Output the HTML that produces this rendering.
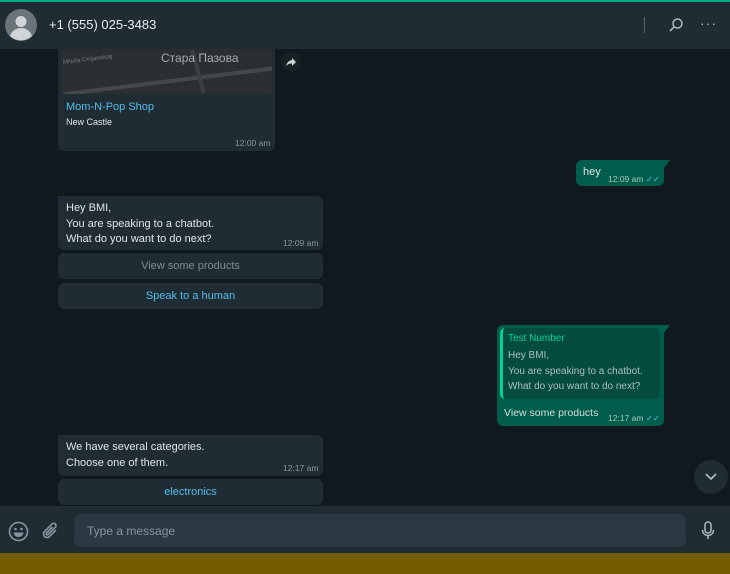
<!DOCTYPE html>
<html><head><meta charset="utf-8"><style>
*{margin:0;padding:0;box-sizing:border-box}
body{width:730px;height:574px;background:#0f191e;font-family:"Liberation Sans",sans-serif;position:relative;overflow:hidden;color:#e1e5e7}
.a{position:absolute}
.in{background:#1f2c33;border-radius:6px}
.btn{background:#1f2c33;border-radius:6px;text-align:center;font-size:11px;line-height:26px;color:#53bdeb}
.t{font-size:12px;line-height:16px}
.tm{font-size:8.5px;color:#8696a0}
</style></head><body>
<div class="a" style="left:0;top:0;width:730px;height:2px;background:#00a884"></div>
<div class="a" style="left:0;top:2px;width:730px;height:47px;background:#1f2c33"></div>
<svg class="a" style="left:5px;top:9px" width="32" height="32" viewBox="0 0 32 32"><circle cx="16" cy="16" r="16" fill="#6b7478"/><circle cx="16" cy="12.5" r="5.5" fill="#cfd4d6"/><path d="M5 27c2-6 7-8 11-8s9 2 11 8a16 16 0 0 1-22 0z" fill="#cfd4d6"/></svg>
<div class="a" style="left:49px;top:17px;font-size:13px;color:#e9edef">+1 (555) 025-3483</div>
<div class="a" style="left:644px;top:17px;width:1px;height:16px;background:#5a6469"></div>
<svg class="a" style="left:668px;top:17px" width="16" height="16" viewBox="0 0 16 16"><circle cx="9.5" cy="6.5" r="4.5" fill="none" stroke="#aebac1" stroke-width="1.5"/><path d="M6.3 9.7L2 14" stroke="#aebac1" stroke-width="1.6"/></svg>
<div class="a" style="left:700px;top:15px;font-size:14px;color:#aebac1;letter-spacing:1px">···</div>

<div class="a in" style="left:58px;top:44px;width:217px;height:107px;border-radius:0 0 6px 6px"></div>
<div class="a" style="left:61px;top:49px;width:211px;height:45px;background:#2c2f31;border-radius:0 0 5px 5px;overflow:hidden">
<div class="a" style="left:-10px;top:30px;width:240px;height:4px;background:#45484a;transform:rotate(-7deg)"></div>
<div class="a" style="left:135px;top:0;width:4px;height:45px;background:#3c3f41;transform:rotate(-15deg)"></div>
<div class="a" style="left:100px;top:2px;font-size:12px;color:#a8abad">Стара Пазова</div>
<div class="a" style="left:2px;top:8px;font-size:6px;color:#77797b;transform:rotate(-7deg)">Miloša Crnjanskog</div>
</div>
<div class="a" style="left:66px;top:101px;font-size:11px;color:#53bdeb">Mom-N-Pop Shop</div>
<div class="a" style="left:66px;top:117px;font-size:9px;color:#e1e5e7">New Castle</div>
<div class="a tm" style="left:235px;top:138px">12:00 am</div>
<svg class="a" style="left:281px;top:52px" width="20" height="20" viewBox="0 0 20 20"><circle cx="10" cy="10" r="10" fill="#182024"/><path d="M11 6l4 4-4 4v-2.5c-3 0-5 1-6 3 .5-3.5 2.5-6 6-6.5z" fill="#c9cfd2"/></svg>

<div class="a" style="left:576px;top:160px;width:88px;height:26px;background:#005c4b;border-radius:6px 0 6px 6px"></div>
<div class="a" style="left:664px;top:160px;width:0;height:0;border-top:8px solid #005c4b;border-right:6px solid transparent"></div>
<div class="a" style="left:583px;top:166px;font-size:11px">hey</div>
<div class="a tm" style="left:608px;top:174px;color:#a8c7c1">12:09 am <span style="color:#53bdeb">✓✓</span></div>

<div class="a in" style="left:58px;top:196px;width:265px;height:54px;border-radius:0 6px 6px 6px"></div>
<div class="a t" style="left:66px;top:201px;font-size:11px;line-height:15.5px">Hey BMI,<br>You are speaking to a chatbot.<br>What do you want to do next?</div>
<div class="a tm" style="left:283px;top:238px">12:09 am</div>
<div class="a btn" style="left:58px;top:253px;width:265px;height:26px;color:#7f8b91">View some products</div>
<div class="a btn" style="left:58px;top:283px;width:265px;height:26px">Speak to a human</div>

<div class="a" style="left:497px;top:325px;width:167px;height:101px;background:#005c4b;border-radius:6px 0 6px 6px"></div>
<div class="a" style="left:664px;top:325px;width:0;height:0;border-top:8px solid #005c4b;border-right:6px solid transparent"></div>
<div class="a" style="left:500px;top:328px;width:160px;height:71px;background:#034c3f;border-radius:5px;border-left:3px solid #06cf9c"></div>
<div class="a" style="left:508px;top:333px;font-size:10px;color:#06cf9c">Test Number</div>
<div class="a" style="left:508px;top:348px;font-size:10px;line-height:15.5px;color:#aebfbb">Hey BMI,<br>You are speaking to a chatbot.<br>What do you want to do next?</div>
<div class="a" style="left:504px;top:407px;font-size:10.5px;color:#d5dedc">View some products</div>
<div class="a tm" style="left:608px;top:413px;color:#a8c7c1">12:17 am <span style="color:#53bdeb">✓✓</span></div>

<div class="a in" style="left:58px;top:435px;width:265px;height:41px;border-radius:0 6px 6px 6px"></div>
<div class="a" style="left:66px;top:440px;font-size:11px;line-height:15.5px">We have several categories.<br>Choose one of them.</div>
<div class="a tm" style="left:283px;top:463px">12:17 am</div>
<div class="a btn" style="left:58px;top:479px;width:265px;height:26px">electronics</div>

<div class="a" style="left:694px;top:460px;width:34px;height:34px;border-radius:50%;background:#1f2c33"></div>
<svg class="a" style="left:704px;top:471px" width="14" height="12" viewBox="0 0 14 12"><path d="M2 3l5 5 5-5" fill="none" stroke="#aebac1" stroke-width="1.8"/></svg>

<div class="a" style="left:0;top:506px;width:730px;height:47px;background:#1f2c33"></div>
<svg class="a" style="left:8px;top:521px" width="21" height="21" viewBox="0 0 21 21"><circle cx="10.5" cy="10.5" r="9" fill="none" stroke="#8696a0" stroke-width="1.6"/><circle cx="7.5" cy="8" r="1.3" fill="#8696a0"/><circle cx="13.5" cy="8" r="1.3" fill="#8696a0"/><path d="M5.5 11.5h10c-.5 3-2.5 4.5-5 4.5s-4.5-1.5-5-4.5z" fill="#8696a0"/></svg>
<svg class="a" style="left:41px;top:521px" width="20" height="20" viewBox="0 0 20 20"><path d="M15 9l-6.5 6.5a3.5 3.5 0 0 1-5-5L11 3a2.3 2.3 0 0 1 3.3 3.3L7 13.5a1.1 1.1 0 0 1-1.6-1.6L11.5 6" fill="none" stroke="#8696a0" stroke-width="1.6"/></svg>
<div class="a" style="left:74px;top:514px;width:612px;height:33px;background:#2a3942;border-radius:7px"></div>
<div class="a" style="left:87px;top:524px;font-size:12px;color:#8696a0">Type a message</div>
<svg class="a" style="left:701px;top:521px" width="14" height="20" viewBox="0 0 14 20"><rect x="4" y="1" width="6" height="11" rx="3" fill="none" stroke="#aebac1" stroke-width="1.5"/><path d="M1.5 9a5.5 5.5 0 0 0 11 0M7 14.5V18" fill="none" stroke="#aebac1" stroke-width="1.5"/></svg>
<div class="a" style="left:0;top:553px;width:730px;height:21px;background:#735c00"></div>
</body></html>
